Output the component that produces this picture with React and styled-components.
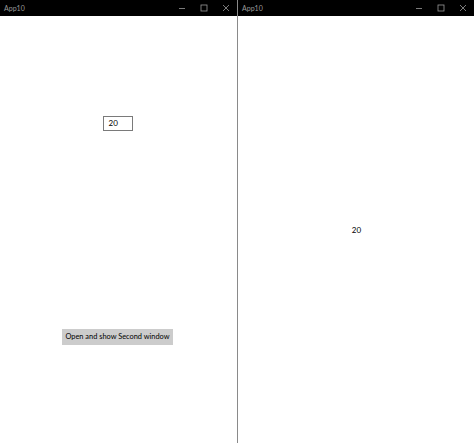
import React from "react";
import styled, { createGlobalStyle } from "styled-components";

const Global = createGlobalStyle`
  html, body {
    margin: 0;
    padding: 0;
    background: #fff;
  }
  body {
    font-family: Lato, "Noto Sans", sans-serif;
  }
`;

const Desktop = styled.div`
  display: flex;
  width: 474px;
  height: 443px;
  overflow: hidden;
`;

const Window = styled.div`
  display: flex;
  flex-direction: column;
  width: ${({ w }) => (w ? `${w}px` : "auto")};
  flex: ${({ w }) => (w ? "none" : "1")};
  border-right: ${({ edge }) => (edge ? "1px solid #8a8a8a" : "none")};
  background: #fff;
`;

const TitleBar = styled.div`
  display: flex;
  align-items: center;
  height: 16px;
  background: #000;
  padding-left: 4px;
`;

const Title = styled.span`
  flex: 1;
  color: #9a9a9a;
  font-size: 7px;
  line-height: 16px;
`;

const Controls = styled.div`
  display: flex;
  height: 16px;
`;

const CtrlButton = styled.div`
  width: 22px;
  height: 16px;
  display: flex;
  align-items: center;
  justify-content: center;
  svg {
    display: block;
  }
`;

const Content = styled.div`
  flex: 1;
  display: flex;
  flex-direction: column;
  align-items: center;
`;

const LeftContent = styled(Content)`
  padding-top: 100px;
  padding-right: 2px;
`;

const RightContent = styled(Content)`
  justify-content: center;
`;

const TextBox = styled.div`
  box-sizing: border-box;
  width: 30px;
  height: 15px;
  border: 1px solid #7a7a7a;
  font-size: 8px;
  line-height: 13px;
  padding-left: 5px;
  color: #000;
`;

const ActionButton = styled.div`
  margin-top: 198px;
  box-sizing: border-box;
  width: 111px;
  height: 16px;
  background: #cccccc;
  font-size: 7.4px;
  line-height: 16px;
  text-align: center;
  white-space: nowrap;
  color: #000;
`;

const Label = styled.span`
  font-size: 8px;
  color: #000;
  margin-left: 1px;
`;

const WindowControls = () => (
  <Controls>
    <CtrlButton>
      <svg width="8" height="8" viewBox="0 0 8 8">
        <path d="M1 4.5h6" stroke="#9a9a9a" strokeWidth="0.8" />
      </svg>
    </CtrlButton>
    <CtrlButton>
      <svg width="8" height="8" viewBox="0 0 8 8">
        <rect x="1" y="1" width="6" height="6" fill="none" stroke="#9a9a9a" strokeWidth="0.8" />
      </svg>
    </CtrlButton>
    <CtrlButton>
      <svg width="8" height="8" viewBox="0 0 8 8">
        <path d="M1 1l6 6M7 1l-6 6" stroke="#9a9a9a" strokeWidth="0.8" />
      </svg>
    </CtrlButton>
  </Controls>
);

const App = () => {
  return (
    <>
      <Global />
      <Desktop>
        <Window w={237} edge>
          <TitleBar>
            <Title>App10</Title>
            <WindowControls />
          </TitleBar>
          <LeftContent>
            <TextBox>20</TextBox>
            <ActionButton>Open and show Second window</ActionButton>
          </LeftContent>
        </Window>
        <Window>
          <TitleBar>
            <Title>App10</Title>
            <WindowControls />
          </TitleBar>
          <RightContent>
            <Label>20</Label>
          </RightContent>
        </Window>
      </Desktop>
    </>
  );
};

export default App;
